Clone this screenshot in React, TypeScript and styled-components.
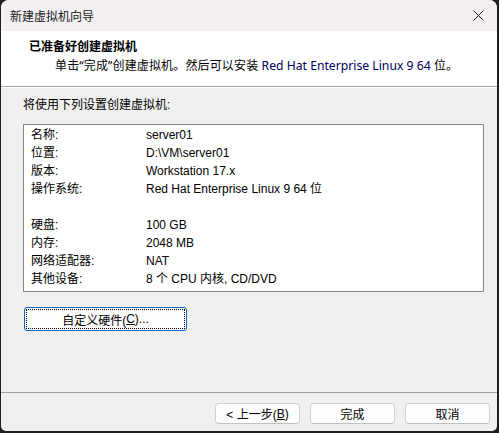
import React from 'react'
import styled, { createGlobalStyle } from 'styled-components'

const GlobalStyle = createGlobalStyle`
  html, body {
    margin: 0;
    padding: 0;
    background: #1f1f1f;
  }
  body {
    font-family: "Liberation Sans", "Noto Sans CJK SC", sans-serif;
    font-size: 12px;
    color: #000;
  }
`

interface Row {
  label: string
  value: string
}

const settings: (Row | null)[] = [
  { label: '名称:', value: 'server01' },
  { label: '位置:', value: 'D:\\VM\\server01' },
  { label: '版本:', value: 'Workstation 17.x' },
  { label: '操作系统:', value: 'Red Hat Enterprise Linux 9 64 位' },
  null,
  { label: '硬盘:', value: '100 GB' },
  { label: '内存:', value: '2048 MB' },
  { label: '网络适配器:', value: 'NAT' },
  { label: '其他设备:', value: '8 个 CPU 内核, CD/DVD' },
]

const App: React.FC = () => {
  return (
    <>
      <GlobalStyle />
      <StyledWindow>
        <StyledTitleBar>
          <StyledTitle>新建虚拟机向导</StyledTitle>
          <StyledClose>
            <svg width="11" height="11" viewBox="0 0 11 11">
              <path d="M0.5 0.5 L10.5 10.5 M10.5 0.5 L0.5 10.5" stroke="#1a1a1a" strokeWidth="1" />
            </svg>
          </StyledClose>
        </StyledTitleBar>
        <StyledHeader>
          <StyledHeading>已准备好创建虚拟机</StyledHeading>
          <StyledSubheading>
            单击“完成”创建虚拟机。然后可以安装 <StyledOsName>Red Hat Enterprise Linux 9 64</StyledOsName> 位。
          </StyledSubheading>
        </StyledHeader>
        <StyledBody>
          <StyledIntro>将使用下列设置创建虚拟机:</StyledIntro>
          <StyledSummary>
            {settings.map((row, i) =>
              row ? (
                <StyledRow key={i}>
                  <StyledLabel>{row.label}</StyledLabel>
                  <span>{row.value}</span>
                </StyledRow>
              ) : (
                <StyledRow key={i} />
              )
            )}
          </StyledSummary>
          <StyledCustomize>
            <StyledFocus>
              自定义硬件(<u>C</u>)...
            </StyledFocus>
          </StyledCustomize>
        </StyledBody>
        <StyledFooter>
          <StyledButton>
            &lt; 上一步(<u>B</u>)
          </StyledButton>
          <StyledButton>完成</StyledButton>
          <StyledButton>取消</StyledButton>
        </StyledFooter>
      </StyledWindow>
    </>
  )
}

const StyledWindow = styled.div`
  box-sizing: border-box;
  width: 496px;
  height: 431px;
  margin: 0 2px 2px 1px;
  border-radius: 8px 8px 5px 5px;
  overflow: hidden;
  background: #f0f0f0;
  display: flex;
  flex-direction: column;
`

const StyledTitleBar = styled.div`
  height: 31px;
  flex: none;
  display: flex;
  align-items: center;
  justify-content: space-between;
  background: #f3eff3;
  padding: 0 9px 0 9px;
`

const StyledTitle = styled.div`
  font-size: 12px;
  color: #1a1a1a;
  margin-top: -1px;
`

const StyledClose = styled.div`
  width: 11px;
  height: 11px;
  display: flex;
  margin-right: 4px;
  margin-top: -1px;
`

const StyledHeader = styled.div`
  height: 56px;
  flex: none;
  background: #fff;
  border-bottom: 1px solid #a0a0a0;
  box-sizing: border-box;
  padding: 8px 0 0 28px;
  display: flex;
  flex-direction: column;
`

const StyledHeading = styled.div`
  font-weight: 700;
  font-size: 12px;
  line-height: 17px;
`

const StyledSubheading = styled.div`
  padding-left: 26px;
  line-height: 17px;
  margin-top: 1px;
  letter-spacing: 0.15px;
  font-family: "Noto Sans", "Noto Sans CJK SC", sans-serif;
`

const StyledOsName = styled.span`
  color: #000060;
  font-size: 12.2px;
  letter-spacing: 0;
`

const StyledBody = styled.div`
  flex: 1;
  padding: 9px 13px 0 22px;
  display: flex;
  flex-direction: column;
  border-top: 1px solid #fff;
`

const StyledIntro = styled.div`
  line-height: 17px;
`

const StyledSummary = styled.div`
  margin-top: 10px;
  height: 168px;
  box-sizing: border-box;
  background: #fff;
  border: 1px solid #848484;
  padding: 1px 0 0 7px;
  display: flex;
  flex-direction: column;
`

const StyledRow = styled.div`
  height: 18px;
  line-height: 18px;
  display: flex;
  white-space: nowrap;
`

const StyledLabel = styled.span`
  width: 115px;
  flex: none;
`

const StyledCustomize = styled.div`
  margin: 15px 0 0 1px;
  width: 163px;
  height: 24px;
  box-sizing: border-box;
  border: 1px solid #0067c0;
  border-radius: 3px;
  background: #fdfdfd;
  padding: 1px;
`

const StyledFocus = styled.div`
  height: 100%;
  box-sizing: border-box;
  border: 1px dotted #000;
  display: flex;
  align-items: center;
  justify-content: center;
`

const StyledFooter = styled.div`
  height: 39px;
  flex: none;
  border-top: 1px solid #a0a0a0;
  display: flex;
  justify-content: flex-end;
  align-items: flex-start;
  gap: 10px;
  padding: 10px 7px 0 0;
  box-sizing: border-box;
`

const StyledButton = styled.div`
  width: 85px;
  height: 21px;
  box-sizing: border-box;
  border: 1px solid #d0d0d0;
  border-bottom-color: #c0c0c0;
  border-radius: 4px;
  background: #fdfdfd;
  display: flex;
  align-items: center;
  justify-content: center;
`

export default App
